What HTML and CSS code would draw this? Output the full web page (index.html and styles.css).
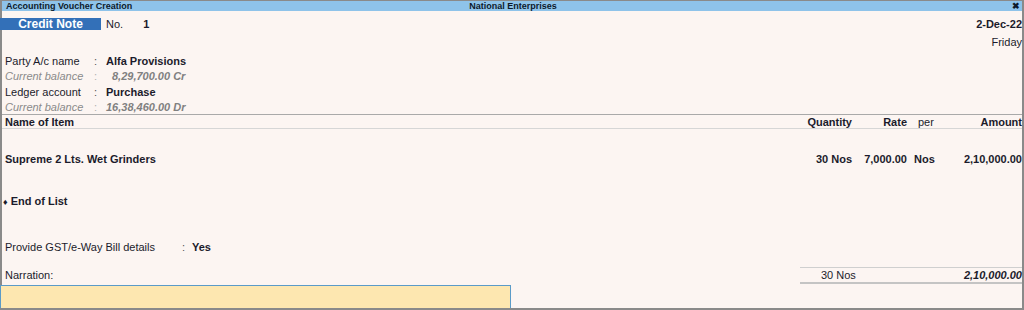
FILE: index.html
```html
<!DOCTYPE html>
<html>
<head>
<meta charset="utf-8">
<link rel="stylesheet" href="styles.css">
</head>
<body>
<div class="frame">
  <div class="titlebar">
    <span class="tb-left">Accounting Voucher Creation</span>
    <span class="tb-center">National Enterprises</span>
    <span class="tb-right">&#x2716;</span>
  </div>
  <div class="top">
    <div class="vtype">
      <span class="vbox">Credit Note</span>
      <span class="no">No.</span>
      <span class="num">1</span>
    </div>
    <div class="dates">
      <div class="date">2-Dec-22</div>
      <div class="day">Friday</div>
    </div>
  </div>
  <div class="ledgers">
    <div class="lrow"><span class="lbl">Party A/c name</span><span class="colon">:</span><span class="val">Alfa Provisions</span></div>
    <div class="lrow sub"><span class="lbl">Current balance</span><span class="colon">:</span><span class="val ind">8,29,700.00 Cr</span></div>
    <div class="lrow"><span class="lbl">Ledger account</span><span class="colon">:</span><span class="val">Purchase</span></div>
    <div class="lrow sub"><span class="lbl">Current balance</span><span class="colon">:</span><span class="val">16,38,460.00 Dr</span></div>
  </div>
  <div class="thead">
    <span class="c-name">Name of Item</span>
    <span class="c-qty">Quantity</span>
    <span class="c-rate">Rate</span>
    <span class="c-per">per</span>
    <span class="c-amt">Amount</span>
  </div>
  <div class="trow">
    <span class="c-name">Supreme 2 Lts. Wet Grinders</span>
    <span class="c-qty">30 Nos</span>
    <span class="c-rate">7,000.00</span>
    <span class="c-per b">Nos</span>
    <span class="c-amt">2,10,000.00</span>
  </div>
  <div class="eol"><span class="dia">&#9830;</span> End of List</div>
  <div class="gst"><span class="glbl">Provide GST/e-Way Bill details</span><span class="colon">:</span><span class="val">Yes</span></div>
  <div class="narr">
    <span class="nlbl">Narration:</span>
    <div class="totals">
      <span class="t-qty">30 Nos</span>
      <span class="t-amt">2,10,000.00</span>
    </div>
  </div>
  <div class="nbox"></div>
</div>
</body>
</html>
```
FILE: styles.css
```css
* { box-sizing: border-box; }
html, body { margin: 0; padding: 0; }
body {
  width: 1024px;
  height: 310px;
  overflow: hidden;
  font-family: "Liberation Sans", Arial, sans-serif;
  font-size: 11px;
  color: #1b1b2b;
  background: #fff;
}
.frame {
  width: 1024px;
  height: 310px;
  background: #fcf5f2;
  border-top: 1px solid #8a8a8a;
  border-left: 2px solid #8a8a8a;
  border-right: 2px solid #8a8a8a;
  border-bottom: 2px solid #8a8a8a;
  display: flex;
  flex-direction: column;
}
.titlebar {
  height: 10px;
  background: #8ec3ea;
  display: flex;
  align-items: center;
  font-size: 9px;
  font-weight: bold;
  line-height: 10px;
  color: #0d1a2a;
  padding: 0 2px 0 4px;
}
.tb-left { flex: 1; }
.tb-center { flex: 1; text-align: center; }
.tb-right { flex: 1; text-align: right; font-size: 9px; }
.top {
  display: flex;
  justify-content: space-between;
  padding-top: 7px;
}
.vtype {
  display: flex;
  align-items: center;
  height: 12px;
}
.vbox {
  width: 101px;
  height: 12px;
  margin-left: -2px;
  background: #3370b8;
  color: #fff;
  font-weight: bold;
  font-size: 12px;
  line-height: 12px;
  text-align: center;
}
.no { margin-left: 5px; }
.num { margin-left: 20px; font-weight: bold; }
.dates { text-align: right; }
.date { font-weight: bold; line-height: 12px; }
.day { line-height: 13px; margin-top: 6px; }
.ledgers { margin-top: 5px; padding-left: 3px; }
.lrow { display: flex; height: 15.4px; line-height: 15.4px; }
.lbl { width: 89px; }
.colon { width: 12px; color: #555; }
.lrow .val { font-weight: bold; }
.lrow.sub { color: #8a8a8a; font-style: italic; }
.lrow.sub .colon { color: #b0b0b0; font-style: normal; }
.lrow.sub .val { color: #808080; }
.ind { padding-left: 6px; }
.thead {
  display: flex;
  margin-top: -2px;
  border-top: 1px solid #a9a9a9;
  border-bottom: 1px solid #d6d6d6;
  height: 15px;
  line-height: 14px;
  font-weight: bold;
  padding-left: 3px;
}
.c-name { flex: 1; }
.c-qty { width: 80px; text-align: right; }
.c-rate { width: 55px; text-align: right; }
.c-per { width: 40px; padding-left: 11px; font-weight: normal; }
.c-per.b { font-weight: bold; padding-left: 7px; }
.c-amt { width: 75px; text-align: right; }
.trow {
  display: flex;
  margin-top: 23px;
  line-height: 14px;
  font-weight: bold;
  padding-left: 3px;
}
.eol {
  margin-top: 28px;
  line-height: 14px;
  font-weight: bold;
  padding-left: 1px;
}
.dia { font-size: 9px; }
.gst {
  display: flex;
  margin-top: 31px;
  line-height: 14px;
  padding-left: 3px;
}
.glbl { width: 177px; }
.gst .colon { width: 10px; }
.gst .val { font-weight: bold; }
.narr {
  display: flex;
  justify-content: space-between;
  align-items: center;
  margin-top: 13px;
  height: 17px;
  padding-left: 3px;
}
.totals {
  width: 222px;
  height: 17px;
  border-top: 1px solid #cfcfcf;
  border-bottom: 2px solid #c4c4c4;
  display: flex;
  justify-content: space-between;
  align-items: center;
  padding-left: 21px;
}
.t-amt { font-weight: bold; font-style: italic; }
.nbox {
  width: 511px;
  margin-left: -2px;
  height: 24px;
  margin-top: 1px;
  background: #fde7b0;
  border: 1px solid #5b9bc8;
  border-bottom: none;
}
```
